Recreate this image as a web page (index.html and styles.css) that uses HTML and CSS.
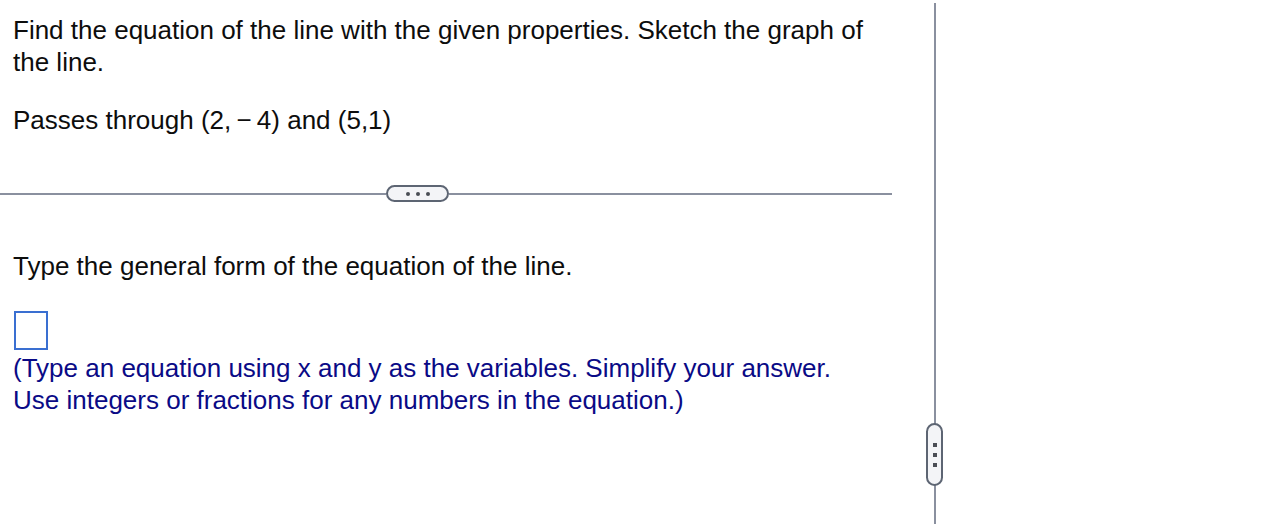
FILE: index.html
```html
<!DOCTYPE html>
<html>
<head>
<meta charset="utf-8">
<link rel="stylesheet" href="styles.css">
</head>
<body>
<div class="page">
  <main class="left">
    <section class="question">
      <p class="q-text">Find the equation of the line with the given properties. Sketch the graph of the line.</p>
      <p class="q-given">Passes through (2,&thinsp;&minus;&thinsp;4) and (5,1)</p>
    </section>
    <div class="divider">
      <span class="rule rule-a"></span>
      <button class="more-h" type="button"><span class="dot"></span><span class="dot"></span><span class="dot"></span></button>
      <span class="rule rule-b"></span>
    </div>
    <section class="answer">
      <p class="prompt">Type the general form of the equation of the line.</p>
      <div class="answer-box"></div>
      <p class="hint">(Type an equation using x and y as the variables. Simplify your answer.<br>Use integers or fractions for any numbers in the equation.)</p>
    </section>
  </main>
  <div class="vsplit">
    <button class="more-v" type="button"><span class="sq"></span><span class="sq"></span><span class="sq"></span></button>
  </div>
  <aside class="right"></aside>
</div>
</body>
</html>
```

FILE: styles.css
```css
html, body {
  margin: 0;
  padding: 0;
  background: #ffffff;
}
body {
  font-family: "Liberation Sans", Arial, Helvetica, sans-serif;
  color: #0d0d0d;
  width: 1288px;
  height: 524px;
  overflow: hidden;
}
.page {
  display: flex;
  height: 524px;
}
.left {
  width: 934px;
  flex: none;
}
.question {
  padding: 14px 0 0 13px;
}
.q-text {
  margin: 0;
  width: 872px;
  font-size: 26px;
  line-height: 32px;
}
.q-given {
  margin: 26px 0 0 0;
  font-size: 26px;
  line-height: 32px;
}
.divider {
  display: flex;
  align-items: center;
  width: 892px;
  margin-top: 49px;
  height: 17px;
}
.rule {
  height: 2px;
  background: #8a909f;
}
.rule-a { width: 386px; }
.rule-b { flex: 1; }
.more-h {
  width: 63px;
  height: 17px;
  box-sizing: border-box;
  border: 2px solid #5d6573;
  border-radius: 9px;
  background: #f3f4f7;
  padding: 0;
  display: flex;
  align-items: center;
  justify-content: center;
  gap: 6px;
}
.dot {
  width: 4px;
  height: 4px;
  border-radius: 50%;
  background: #4a4d55;
}
.answer {
  padding: 0 0 0 13px;
}
.prompt {
  margin: 48px 0 0 0;
  font-size: 26px;
  line-height: 32px;
}
.answer-box {
  margin: 29px 0 0 1px;
  width: 34px;
  height: 39px;
  box-sizing: border-box;
  border: 2px solid #3a6fd1;
}
.hint {
  margin: 2px 0 0 0;
  font-size: 26px;
  line-height: 32px;
  color: #0a0a86;
}
.vsplit {
  position: relative;
  width: 2px;
  flex: none;
  margin-top: 3px;
  background: #8a909f;
}
.more-v {
  position: absolute;
  left: -8px;
  top: 420px;
  width: 17px;
  height: 63px;
  box-sizing: border-box;
  border: 2px solid #5d6573;
  border-radius: 9px;
  background: #f3f4f7;
  padding: 0;
  display: flex;
  flex-direction: column;
  align-items: center;
  justify-content: center;
  gap: 6px;
}
.sq {
  width: 4px;
  height: 4px;
  background: #4a4d55;
}
.right {
  flex: 1;
}
```
